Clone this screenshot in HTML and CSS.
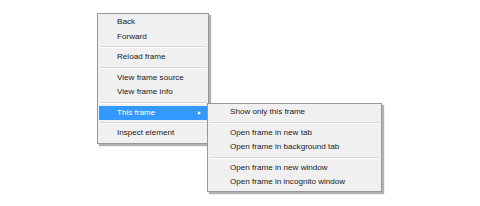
FILE: index.html
```html
<!DOCTYPE html>
<html lang="en">
  <head>
    <meta charset="UTF-8" />
    <title>Context menu</title>
    <link rel="stylesheet" href="styles.css">
  </head>
  <body>
    <div class="stage">
      <ul class="menu main-menu">
        <li class="item">Back</li>
        <li class="item">Forward</li>
        <li class="sep"></li>
        <li class="item">Reload frame</li>
        <li class="sep"></li>
        <li class="item">View frame source</li>
        <li class="item">View frame info</li>
        <li class="sep"></li>
        <li class="item on">This frame<span class="arrow"></span></li>
        <li class="sep"></li>
        <li class="item">Inspect element</li>
      </ul>

      <ul class="menu sub-menu">
        <li class="item">Show only this frame</li>
        <li class="sep"></li>
        <li class="item">Open frame in new tab</li>
        <li class="item">Open frame in background tab</li>
        <li class="sep"></li>
        <li class="item">Open frame in new window</li>
        <li class="item">Open frame in incognito window</li>
      </ul>
    </div>
  </body>
</html>
```

FILE: styles.css
```css
* {
  margin: 0;
  padding: 0;
  box-sizing: border-box;
}

body {
  background: #fff;
  font-family: "Liberation Sans", Arial, sans-serif;
  font-size: 8.1px;
  color: #1a1a1a;
}

.stage {
  position: relative;
  width: 480px;
  height: 206px;
}

.menu {
  position: absolute;
  list-style: none;
  background: #f0f0f0;
  border: 1px solid #979797;
  padding: 1px 1px 2px;
  box-shadow: 2px 2px 1px rgba(0, 0, 0, 0.3);
}

.main-menu {
  left: 97px;
  top: 13px;
  width: 112px;
}

.sub-menu {
  left: 207px;
  top: 103px;
  width: 175px;
  padding-bottom: 1px;
}

.menu .item {
  position: relative;
  height: 14.5px;
  line-height: 14.5px;
  padding-left: 18px;
  white-space: nowrap;
}

.sub-menu .item {
  padding-left: 21px;
}

.menu .item.on {
  background: #3399ff;
  color: #fff;
}

.menu .sep {
  height: 6px;
  padding-top: 2px;
}

.menu .sep::before {
  content: "";
  display: block;
  margin: 0 1px;
  height: 1px;
  background: #d5d5d5;
  border-bottom: 1px solid #fff;
  box-sizing: content-box;
}

.arrow {
  position: absolute;
  right: 6px;
  top: 5px;
  width: 0;
  height: 0;
  border-top: 2.5px solid transparent;
  border-bottom: 2.5px solid transparent;
  border-left: 3px solid #fff;
}
```
